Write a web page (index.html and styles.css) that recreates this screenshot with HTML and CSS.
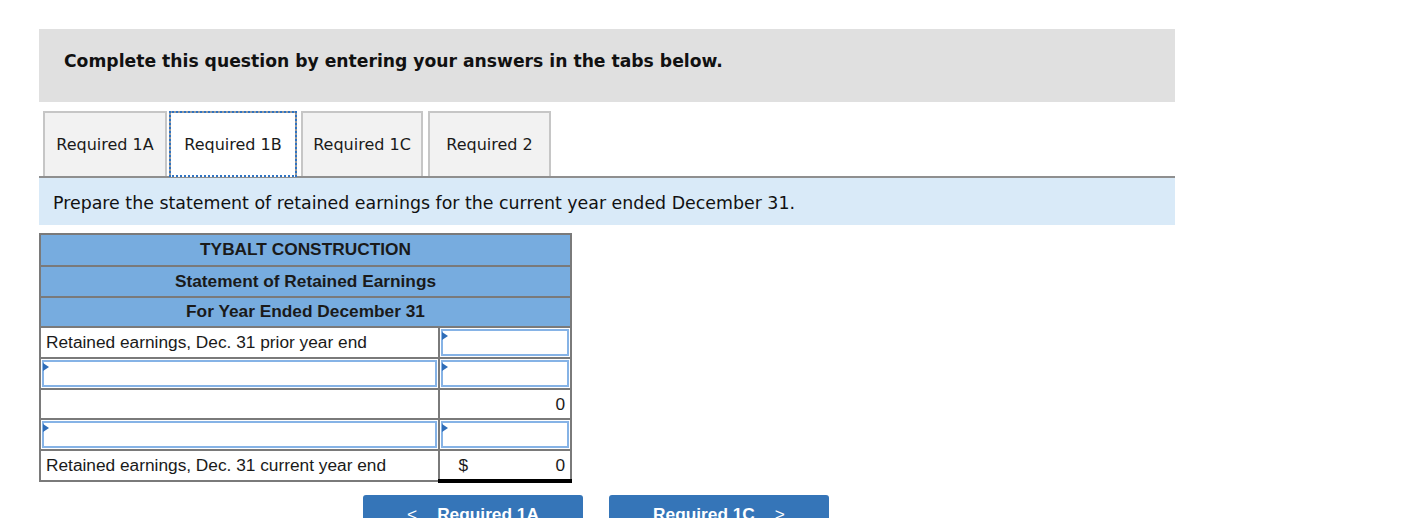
FILE: index.html
```html
<!DOCTYPE html>
<html>
<head>
<meta charset="utf-8">
<link rel="stylesheet" href="styles.css">
</head>
<body>
<div class="page">
  <div class="banner">Complete this question by entering your answers in the tabs below.</div>
  <div class="tabs">
    <div class="tab t1">Required 1A</div>
    <div class="tab t2 active">Required 1B</div>
    <div class="tab t3">Required 1C</div>
    <div class="tab t4">Required 2</div>
  </div>
  <div class="instr">Prepare the statement of retained earnings for the current year ended December 31.</div>
  <table class="stmt">
    <tr class="hd r1"><td colspan="2">TYBALT CONSTRUCTION</td></tr>
    <tr class="hd"><td colspan="2">Statement of Retained Earnings</td></tr>
    <tr class="hd short"><td colspan="2">For Year Ended December 31</td></tr>
    <tr>
      <td class="lbl">Retained earnings, Dec. 31 prior year end</td>
      <td class="amt"><div class="inp"></div></td>
    </tr>
    <tr>
      <td class="lbl"><div class="inp"></div></td>
      <td class="amt"><div class="inp"></div></td>
    </tr>
    <tr class="short">
      <td class="lbl"></td>
      <td class="amt num top-black"><span>0</span></td>
    </tr>
    <tr>
      <td class="lbl"><div class="inp"></div></td>
      <td class="amt"><div class="inp"></div></td>
    </tr>
    <tr>
      <td class="lbl">Retained earnings, Dec. 31 current year end</td>
      <td class="amt num top-black dbl"><span class="dollar">$</span><span>0</span></td>
    </tr>
  </table>
  <div class="nav">
    <div class="btn"><span class="chev">&lt;</span>Required 1A</div>
    <div class="btn">Required 1C<span class="chev r">&gt;</span></div>
  </div>
</div>
</body>
</html>
```

FILE: styles.css
```css
* { box-sizing: border-box; }
html, body { margin: 0; padding: 0; background: #fff; }
body { overflow: hidden; height: 518px; }
.page {
  width: 1136px;
  margin-left: 39px;
  padding-top: 29px;
  font-family: "DejaVu Sans", Verdana, sans-serif;
  color: #111;
}
.banner {
  background: #e0e0e0;
  height: 73px;
  padding: 20px 0 0 25px;
  font-weight: bold;
  font-size: 17.2px;
  line-height: 24px;
}
.tabs {
  display: flex;
  padding-left: 4px;
  margin-top: 9px;
  height: 65px;
}
.tab {
  background: #f2f2f2;
  border: 2px solid #c6c6c6;
  border-bottom: none;
  padding: 0 4px;
  text-align: center;
  font-size: 16px;
  line-height: 63px;
  color: #1a1a1a;
}
.tab.t1 { width: 124px; }
.tab.t2 { width: 128px; margin-left: 2px; }
.tab.t3 { width: 122px; margin-left: 4px; }
.tab.t4 { width: 123px; margin-left: 5px; }
.tab.active {
  background: #fff;
  border-color: #9a9a9a;
  outline: 2px dotted #2f73c2;
  outline-offset: -2px;
  position: relative;
  z-index: 1;
  height: 66px;
}
.instr {
  background: #d9eaf8;
  border-top: 2px solid #8f8f8f;
  height: 49px;
  padding: 13px 0 0 14px;
  font-size: 17.4px;
  line-height: 24px;
  color: #111;
}
.stmt {
  margin-top: 8px;
  border-collapse: collapse;
  width: 533px;
  font-family: "Liberation Sans", Arial, sans-serif;
  font-size: 17.3px;
  color: #1a1a1a;
}
.stmt td {
  border: 2px solid #7a7a7a;
  height: 31px;
  padding: 0 0 2px 0;
  line-height: 20px;
}
.stmt tr.short td { height: 30px; }
.stmt tr.r1 td { height: 32px; }
.stmt tr.hd td {
  background: #77acdf;
  text-align: center;
  font-weight: bold;
}
.stmt td.lbl {
  width: 401px;
  padding: 0 5px 2px;
  position: relative;
}
.stmt td.amt {
  width: 132px;
  position: relative;
  padding: 0 5px 1px;
}
.stmt td.num { text-align: right; }
.stmt td.top-black { border-top: 2px solid #000; }
.stmt td.dbl { border-bottom: 4px solid #000; }
.dollar { float: left; margin-left: 13px; }
.stmt td .inp {
  position: absolute;
  left: 1px; right: 1px; top: 1px; bottom: 1px;
  border: 2px solid #86b3e6;
  background: #fff;
}
.stmt td .inp::before {
  content: "";
  position: absolute;
  left: -1px; top: -1px;
  border-left: 6px solid #2f6db8;
  border-top: 4px solid transparent;
  border-bottom: 4px solid transparent;
  transform: translateY(2px);
}
.nav {
  display: flex;
  gap: 26px;
  margin-top: 12px;
  padding-left: 324px;
}
.btn {
  width: 220px;
  height: 40px;
  background: #3575b8;
  border-radius: 3px 3px 0 0;
  color: #fff;
  font-family: "Liberation Sans", Arial, sans-serif;
  font-weight: bold;
  font-size: 17.3px;
  line-height: 20px;
  text-align: center;
  padding-top: 9px;
}
.chev { font-weight: normal; margin-right: 20px; }
.chev.r { margin-right: 0; margin-left: 20px; }
```
